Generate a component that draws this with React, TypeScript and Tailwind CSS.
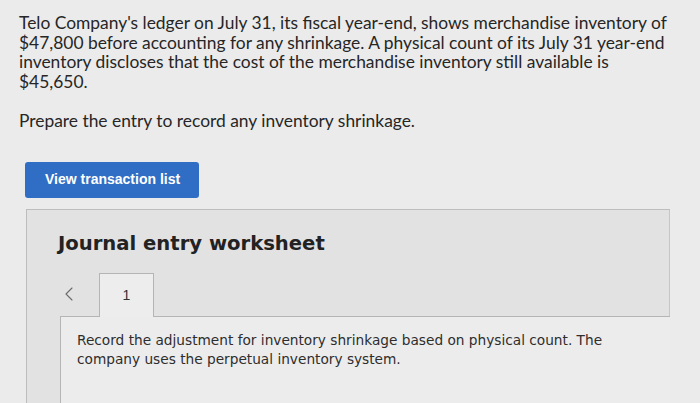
import { ChevronLeft } from 'lucide-react'

export default function App() {
  return (
    <div className="relative h-[403px] w-[700px] overflow-hidden bg-[#ebebeb]">
      {/* question text */}
      <div className="pl-[19px] pt-[13px] font-['Lato',sans-serif] text-[17.4px] leading-[19.6px] text-[#262626]">
        <p>
          Telo Company&apos;s ledger on July 31, its fiscal year-end, shows merchandise inventory of
          <br />
          $47,800 before accounting for any shrinkage. A physical count of its July 31 year-end
          <br />
          inventory discloses that the cost of the merchandise inventory still available is
          <br />
          $45,650.
        </p>
        <p className="mt-[19.6px]">Prepare the entry to record any inventory shrinkage.</p>
      </div>

      <button className="ml-[25px] mt-[31px] h-[36px] w-[174px] rounded-[3px] bg-[#2f6ec4] pl-[20px] text-left font-['Liberation_Sans',sans-serif] text-[14px] font-bold text-white">
        View transaction list
      </button>

      {/* worksheet panel */}
      <div className="ml-[26px] mt-[11px] w-[644px] border-l border-t border-[#bdbdbd] bg-[#e2e2e2]">
        <div className="border-r border-[#c6c6c6]">
          <h2 className="pl-[31px] pt-[22px] font-['DejaVu_Sans',sans-serif] text-[19.6px] font-bold leading-[24px] text-[#222]">
            Journal entry worksheet
          </h2>
          <div className="mt-[16px] flex items-end pl-[30px]">
            <div className="flex h-[44px] w-[42px] items-center justify-start text-[#6a6a6a]">
              <ChevronLeft className="h-[24px] w-[24px]" strokeWidth={1.1} />
            </div>
            <div className="relative z-10 -mb-px flex h-[44px] w-[55px] items-center justify-center border border-b-0 border-[#b5b5b5] bg-[#ededed] font-['Liberation_Sans',sans-serif] text-[14px] text-[#333]">
              1
            </div>
          </div>
        </div>
        <div className="ml-[33px] h-[100px] border-l border-t border-[#b5b5b5] bg-[#ececec] pl-[16px] pt-[14px] font-['DejaVu_Sans',sans-serif] text-[13.7px] leading-[19px] text-[#2e2e2e]">
          <p>
            Record the adjustment for inventory shrinkage based on physical count. The
            <br />
            company uses the perpetual inventory system.
          </p>
        </div>
      </div>
    </div>
  )
}
